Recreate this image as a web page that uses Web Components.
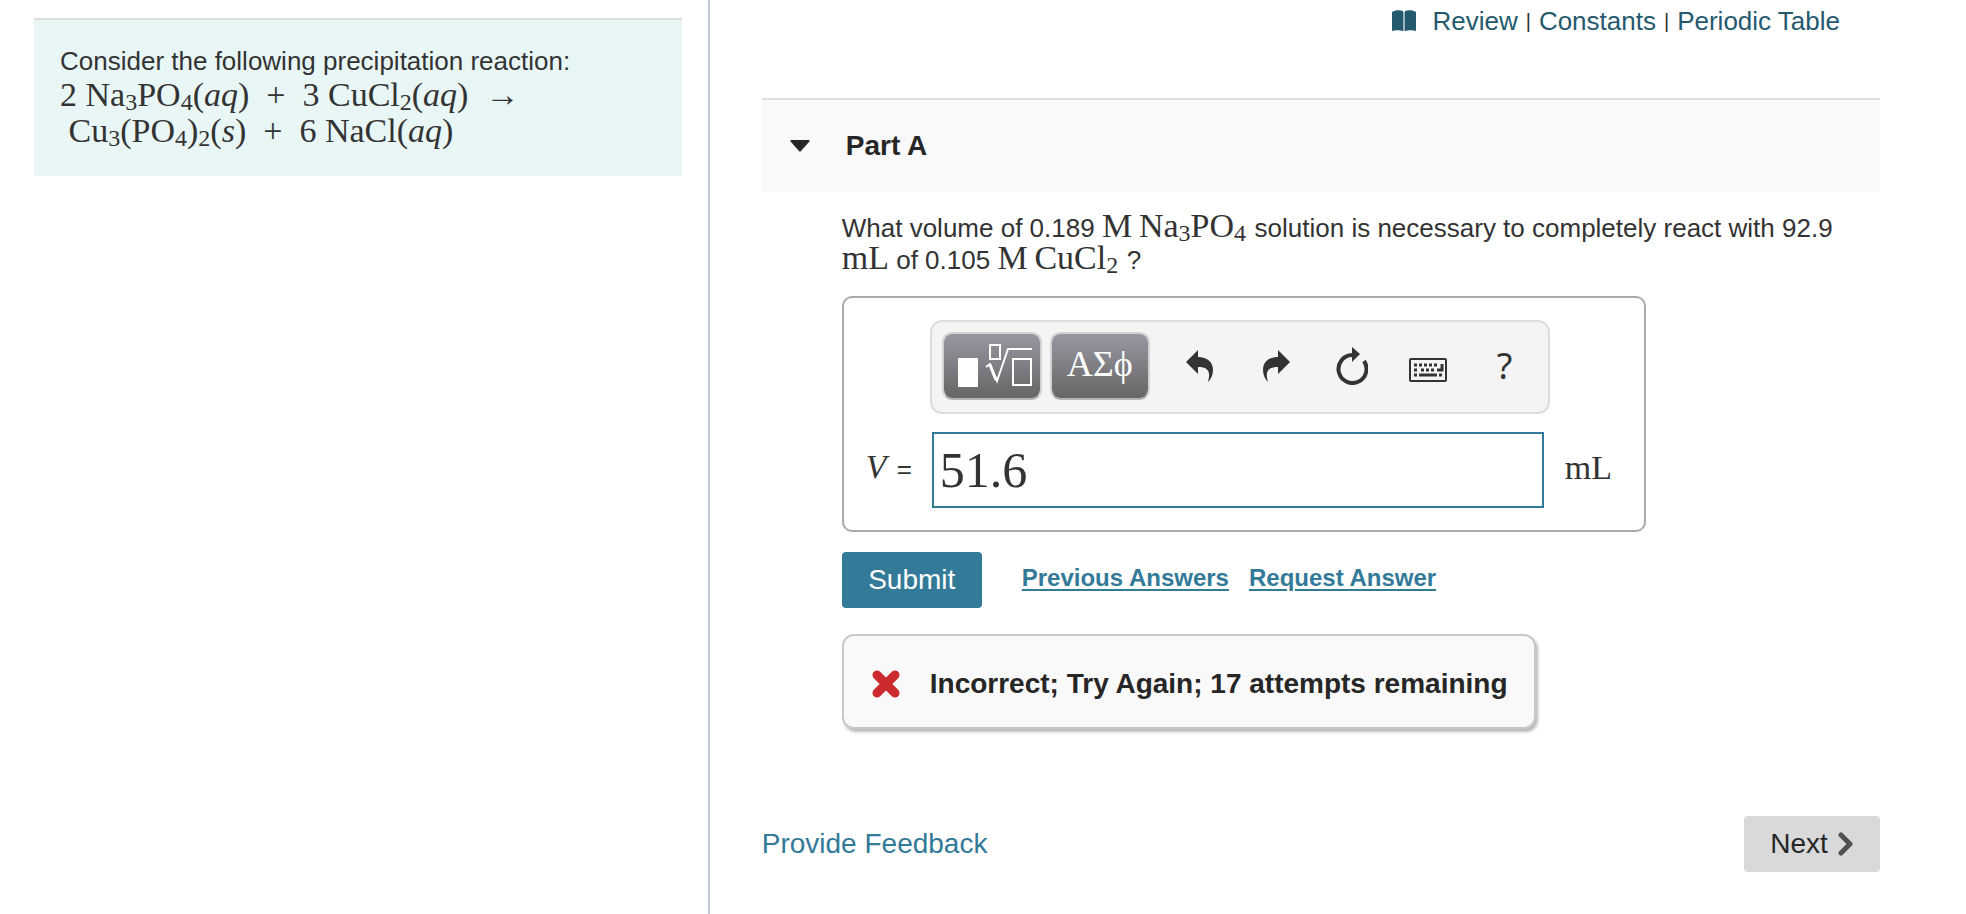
<!DOCTYPE html>
<html lang="en">
<head>
<meta charset="utf-8">
<title>Part A</title>
<style>
  body {
    margin: 0;
    background: #fff;
    color: #333;
    font: 26px/32px "Liberation Sans", Arial, sans-serif;
  }
</style>
</head>
<body>
<item-layout>
  <problem-intro slot="intro">
    Consider the following precipitation reaction:
    <chem-math block>2&nbsp;Na<sub>3</sub>PO<sub>4</sub>(<i>aq</i>)<b>+</b>3&nbsp;CuCl<sub>2</sub>(<i>aq</i>)<b>→</b></chem-math>
    <chem-math block>&nbsp;Cu<sub>3</sub>(PO<sub>4</sub>)<sub>2</sub>(<i>s</i>)<b>+</b>6&nbsp;NaCl(<i>aq</i>)</chem-math>
  </problem-intro>

  <resource-links></resource-links>
  <problem-part label="Part A">
    <span slot="question">What volume of 0.189 <chem-math>M&thinsp;Na<sub>3</sub>PO<sub>4</sub></chem-math> solution is necessary to completely react with 92.9 <chem-math>mL</chem-math> of 0.105 <chem-math>M&thinsp;CuCl<sub>2</sub></chem-math> ?</span>
    <answer-box symbol="V" unit="mL" value="51.6"></answer-box>
    <answer-actions></answer-actions>
    <result-banner>Incorrect; Try Again; 17 attempts remaining</result-banner>
  </problem-part>
  <item-footer></item-footer>
</item-layout>

<script>
  class BaseElement extends HTMLElement {
    constructor() {
      super();
      this._root = this.attachShadow({mode: "open"});
      this._root.innerHTML = this.render();
    }
  }

  class ItemLayout extends BaseElement {
    render() {
      return `
        <style>
          :host {
            display: grid;
            grid-template-columns: 36% 1fr;
            min-height: 100vh;
          }
          aside {
            padding: 18px 26px 18px 34px;
          }
          main {
            border-left: 2px solid #c0ccd9;
            padding: 0 86px 40px 52px;
          }
        </style>
        <aside><slot name="intro"></slot></aside>
        <main><slot></slot></main>
      `;
    }
  }

  class ProblemIntro extends BaseElement {
    render() {
      return `
        <style>
          :host {
            display: block;
            padding: 25px 26px 27px;
            border-top: 2px solid #ddd;
            background: #e8f6f6;
          }
        </style>
        <slot></slot>
      `;
    }
  }

  // formula text; operators are marked up with <b> so they can be spaced
  class ChemMath extends BaseElement {
    render() {
      return `
        <style>
          :host {
            font-family: "Liberation Serif", "Times New Roman", serif;
            font-size: 34px;
            line-height: 28px;
          }
          :host([block]) {
            display: block;
            line-height: 36px;
            white-space: nowrap;
          }
          ::slotted(sub) {
            font-size: 24px;
            line-height: 0;
            vertical-align: -4px;
          }
          ::slotted(b) {
            font-weight: normal;
            margin: 0 17px;
          }
        </style>
        <slot></slot>
      `;
    }
  }

  class ResourceLinks extends BaseElement {
    render() {
      return `
        <style>
          :host { display: block; }
          nav {
            display: flex;
            justify-content: flex-end;
            align-items: center;
            gap: 8px;
            height: 42px;
            padding-right: 40px;
            margin-bottom: 56px;
          }
          svg { margin-right: 8px; }
          a {
            color: #24596e;
            text-decoration: none;
          }
          span { font-size: 20px; }
        </style>
        <nav>
          <svg width="24" height="22" viewBox="0 0 24 22" fill="#24596e">
            <path d="M0 2C3 0 8 0 11 1V21C8 20 3 20 0 21Z"/>
            <path d="M13 1C16 0 21 0 24 2V21C21 20 16 20 13 21Z"/>
            <path d="M11 2h2v19h-2z" opacity=".45"/>
          </svg>
          <a href="#">Review</a><span>|</span><a href="#">Constants</a><span>|</span><a href="#">Periodic Table</a>
        </nav>
      `;
    }
  }

  class ProblemPart extends BaseElement {
    render() {
      return `
        <style>
          :host { display: block; }
          header {
            display: flex;
            align-items: center;
            height: 92px;
            padding-left: 28px;
            border-top: 2px solid #ddd;
            background: #f9f9f9;
          }
          button {
            display: flex;
            align-items: center;
            gap: 36px;
            padding: 0;
            border: 0;
            background: none;
            color: #262626;
            font: bold 28px/32px "Liberation Sans", Arial, sans-serif;
          }
          .body {
            padding: 20px 0 0 80px;
          }
          p {
            margin: 0 0 20px;
          }
        </style>
        <header>
          <button>
            <svg width="20" height="12" viewBox="0 0 20 12" fill="#262626"><path d="M1 0H19Q20 .5 19.4 1.6L11 11Q10 12 9 11L.6 1.6Q0 .5 1 0Z"/></svg>
            ${this.getAttribute("label")}
          </button>
        </header>
        <div class="body">
          <p><slot name="question"></slot></p>
          <slot></slot>
        </div>
      `;
    }
  }

  class MathToolbar extends BaseElement {
    render() {
      return `
        <style>
          :host {
            display: flex;
            align-items: center;
            box-sizing: border-box;
            height: 94px;
            padding: 0 5px 2px 10px;
            border: 2px solid #ddd;
            border-radius: 12px;
            background: #f4f4f4;
          }
          button {
            display: flex;
            flex: 1;
            align-items: center;
            justify-content: center;
            height: 68px;
            padding: 0;
            border: 0;
            background: none;
            color: #333;
            font: 36px/40px "Noto Sans", sans-serif;
          }
          .menu {
            flex: 0 0 100px;
            box-sizing: border-box;
            margin-right: 8px;
            border: 2px solid #d2d2d2;
            border-bottom-color: #b4b4b4;
            border-radius: 10px;
            background: linear-gradient(#9797a1, #666);
            background-clip: padding-box;
            color: #fff;
            font: 36px/40px "Liberation Serif", "Times New Roman", serif;
          }
          .greek {
            margin-right: 12px;
            padding-bottom: 4px;
          }
        </style>
        <button class="menu" aria-label="Templates">
          <svg width="80" height="44" viewBox="0 0 80 44" fill="none" stroke="#fff" stroke-width="2">
            <path d="M6 14h20v29H6z" fill="#fff" stroke="none"/>
            <path d="M38 1h10v14H38zM61 15h18v26H61z"/>
            <path d="M34 23l4-3 7 17L56 5h24"/>
            <path d="M38 21l6 15" stroke-width="3"/>
          </svg>
        </button>
        <button class="menu greek">ΑΣϕ</button>
        <button aria-label="Undo">
          <svg width="28" height="32" viewBox="0 0 28 32" fill="#333"><path d="M0 12L12 0V7C21 7 27 12 27 20C27 25 25 29 22 32C24 25 25 17 12 17V24Z"/></svg>
        </button>
        <button aria-label="Redo">
          <svg width="28" height="32" viewBox="0 0 28 32" fill="#333"><path d="M28 12L16 0V7C7 7 1 12 1 20C1 25 3 29 6 32C4 25 3 17 16 17V24Z"/></svg>
        </button>
        <button aria-label="Reset">
          <svg width="32" height="38" viewBox="0 0 32 38" fill="none" stroke="#333" stroke-width="4">
            <path d="M28 13A14 14 0 1 1 16 7" transform="translate(0 1)"/>
            <path d="M16 0l8 7-8 8z" fill="#333" stroke="none"/>
          </svg>
        </button>
        <button aria-label="Keyboard">
          <svg width="38" height="32" viewBox="0 0 38 32" fill="none" stroke="#333" stroke-width="3">
            <rect x="1" y="9" width="36" height="22" rx="1" stroke-width="2"/>
            <path d="M5 15h23" stroke-dasharray="3 2"/>
            <path d="M5 20h5M12 20h15" stroke-dasharray="3 2"/>
            <path d="M28 20h5V14"/>
            <path d="M5 25h3M10 25h18M30 25h3"/>
          </svg>
        </button>
        <button>?</button>
      `;
    }
  }

  class AnswerBox extends BaseElement {
    render() {
      return `
        <style>
          :host {
            display: grid;
            grid-template-columns: 64px 1fr 70px;
            row-gap: 18px;
            align-items: center;
            box-sizing: border-box;
            max-width: 804px;
            padding: 22px 24px 22px 22px;
            border: 2px solid #aaa;
            border-radius: 10px;
          }
          math-toolbar { grid-column: 2; }
          label, .unit {
            padding-bottom: 4px;
            font-size: 26px;
            line-height: 36px;
          }
          label {
            grid-column: 1;
            white-space: nowrap;
          }
          i, .unit {
            font-family: "Liberation Serif", "Times New Roman", serif;
            font-size: 34px;
          }
          i { margin-right: 3px; }
          input {
            box-sizing: border-box;
            height: 76px;
            margin: 0 6px 0 2px;
            padding: 0 6px;
            border: 2px solid #337a99;
            background: #fff;
            color: #333;
            font: 50px "Liberation Serif", "Times New Roman", serif;
            min-width: 0;
          }
          .unit { padding-left: 15px; }
        </style>
        <math-toolbar></math-toolbar>
        <label for="answer"><i>${this.getAttribute("symbol")}</i> =</label>
        <input id="answer" type="text" value="${this.getAttribute("value")}">
        <span class="unit">${this.getAttribute("unit")}</span>
      `;
    }
  }

  class AnswerActions extends BaseElement {
    render() {
      return `
        <style>
          :host {
            display: flex;
            align-items: center;
            gap: 20px;
            margin: 20px 0 26px;
          }
          button {
            width: 140px;
            height: 56px;
            margin-right: 20px;
            padding: 0;
            border: 0;
            border-radius: 4px;
            background: #337a99;
            color: #fff;
            font: 28px/32px "Liberation Sans", Arial, sans-serif;
          }
          a {
            color: #337a99;
            font-size: 24px;
            font-weight: bold;
            line-height: 28px;
            padding-bottom: 4px;
            text-underline-offset: 3px;
            text-decoration-thickness: 2px;
          }
        </style>
        <button>Submit</button>
        <a href="#">Previous Answers</a>
        <a href="#">Request Answer</a>
      `;
    }
  }

  class ResultBanner extends BaseElement {
    render() {
      return `
        <style>
          :host {
            display: flex;
            align-items: center;
            gap: 30px;
            box-sizing: border-box;
            width: fit-content;
            min-height: 95px;
            padding: 4px 26px 0 28px;
            border: 2px solid #c8c8c8;
            border-radius: 12px;
            background: #f9f9f9;
            box-shadow: 2px 3px 3px #bbb;
            color: #262626;
            font-size: 28px;
            font-weight: bold;
          }
        </style>
        <svg width="28" height="28" viewBox="0 0 28 28"><path d="M5 5L23 23M23 5L5 23" stroke="#cd2a2d" stroke-width="9" stroke-linecap="round"/></svg>
        <span><slot></slot></span>
      `;
    }
  }

  class ItemFooter extends BaseElement {
    render() {
      return `
        <style>
          :host {
            display: flex;
            justify-content: space-between;
            align-items: center;
            margin-top: 87px;
            font-size: 28px;
          }
          a {
            color: #337a99;
            text-decoration: none;
          }
          button {
            display: flex;
            align-items: center;
            justify-content: center;
            gap: 10px;
            width: 136px;
            height: 56px;
            padding: 0;
            border: 0;
            border-radius: 4px;
            background: #d9d9d9;
            color: #262626;
            font: 28px/32px "Liberation Sans", Arial, sans-serif;
          }
        </style>
        <a href="#">Provide Feedback</a>
        <button>Next <svg width="16" height="24" viewBox="0 0 16 24" fill="none"><path d="M3 3L12 12L3 21" stroke="#505050" stroke-width="5" stroke-linecap="round" stroke-linejoin="round"/></svg></button>
      `;
    }
  }

  customElements.define("item-layout", ItemLayout);
  customElements.define("problem-intro", ProblemIntro);
  customElements.define("chem-math", ChemMath);
  customElements.define("resource-links", ResourceLinks);
  customElements.define("problem-part", ProblemPart);
  customElements.define("math-toolbar", MathToolbar);
  customElements.define("answer-box", AnswerBox);
  customElements.define("answer-actions", AnswerActions);
  customElements.define("result-banner", ResultBanner);
  customElements.define("item-footer", ItemFooter);
</script>
</body>
</html>
